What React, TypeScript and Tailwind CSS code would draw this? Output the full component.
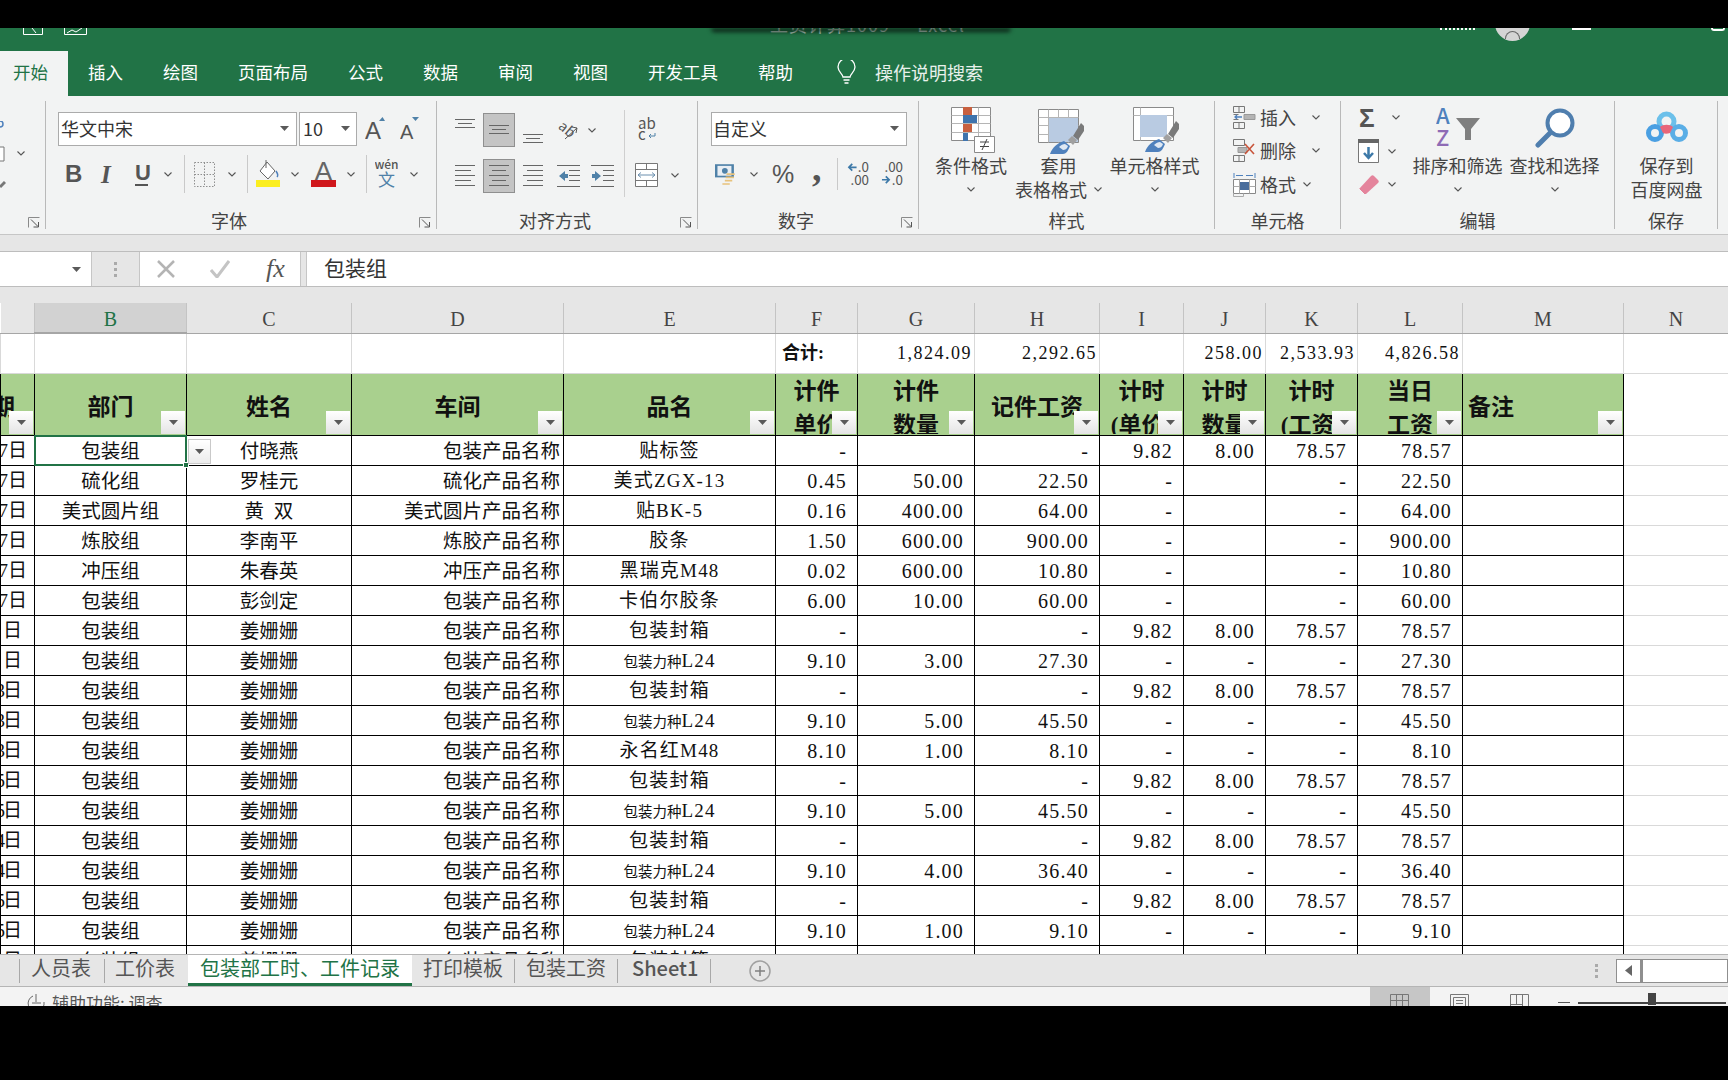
import React from 'react';

const Chev = ({ className = '' }: { className?: string }) => (
  <svg width="8" height="5" viewBox="0 0 8 5" className={`shrink-0 ${className}`}>
    <path d="M.5.5 4 4 7.5.5" fill="none" stroke="#555" strokeWidth="1.1" />
  </svg>
);

const Tri = ({ className = '' }: { className?: string }) => (
  <svg width="9" height="5" viewBox="0 0 9 5" className={`shrink-0 ${className}`}>
    <path d="M0 0h9L4.500 5z" fill="#5a5a5a" />
  </svg>
);

const Launcher = ({ className = '' }: { className?: string }) => (
  <svg width="12" height="11" viewBox="0 0 12 11" className={`absolute ${className}`}>
    <path d="M.5 10.500V.5H11.500" fill="none" stroke="#8a8a8a" />
    <path d="M3 2.500l7 7M10.500 5v5H5.500" fill="none" stroke="#555" />
  </svg>
);

// stack of horizontal strokes, used by the alignment buttons
const Lines = ({ rows, w = 20, h, color = '#666' }: { rows: number[][]; w?: number; h: number; color?: string }) => (
  <svg width={w} height={h} viewBox={`0 0 ${w} ${h}`} className="shrink-0">
    {rows.map(([x1, x2, y], i) => (
      <path key={i} d={`M${x1} ${y + 0.5}H${x2}`} stroke={color} />
    ))}
  </svg>
);

const GridBase = ({ children }: { children?: React.ReactNode }) => (
  <>
    <path d="M.5.5h40v33H.5z" fill="#fff" stroke="#8a8a8a" />
    <path d="M.5 8.500h40M.5 16.500h40M.5 25.500h40M10.500.5v33M20.500.5v33M30.500.5v33" stroke="#b5b5b5" />
    {children}
  </>
);

const Brush = () => (
  <>
    <path d="M35 27l8-13 3 3v5l-6 9z" fill="#7a7a7a" />
    <path d="M30 31l4-4 5 4-4 5z" fill="#a0a0a0" />
    <path d="M12 45c2-6 7-11 14-13l6 5c-2 5-4 8-7 8z" fill="#4f81bd" />
    <path d="M21 38c2-2 4-3 6-3l3 2c-1 3-3 4-5 4z" fill="#dfe8f3" />
  </>
);

const CondFormatIcon = () => (
  <svg width="46" height="46" viewBox="0 0 46 46">
    <path d="M.5.5h39v33H.5z" fill="#fff" stroke="#8a8a8a" />
    <path d="M.5 8.500h39M.5 16.500h39M.5 25.500h39M12.500.5v33M27.500.5v33" stroke="#b5b5b5" />
    <path d="M12 0h9v8h-9zM12 17h9v8h-9z" fill="#c8603f" />
    <path d="M12 8h14v8H12zM12 26h5v8h-5z" fill="#3f74ad" />
    <path d="M23.500 29.500h20v16h-20z" fill="#fff" stroke="#8a8a8a" />
    <path d="M29 35h9M29 39.500h9M31 43l5-11" stroke="#444" fill="none" />
  </svg>
);

const TableStyleIcon = () => (
  <svg width="46" height="46" viewBox="0 0 46 46">
    <GridBase>
      <path d="M11 9h29v24H11z" fill="#b9cbe2" />
    </GridBase>
    <Brush />
  </svg>
);

const CellStyleIcon = () => (
  <svg width="46" height="46" viewBox="0 0 46 46">
    <path d="M.5.5h40v33H.5z" fill="#fff" stroke="#8a8a8a" />
    <path d="M.5 8.500h40M7.500.5v33" stroke="#b5b5b5" />
    <path d="M7 8h27v22H7z" fill="#b9cbe2" />
    <Brush />
  </svg>
);

const InsertIcon = () => (
  <svg width="23" height="23" viewBox="0 0 23 23">
    <path d="M.5.5h11v6H.5zM.5 16.500h11v6H.5zM6 .5v6M6 16.500v6" fill="none" stroke="#777" />
    <path d="M11 8.500h11v5H11z" fill="#b4b4b4" stroke="#999" />
    <path d="M.5 8.500h5M.5 13.500h5" stroke="#777" />
    <path d="M9 11H2M4 9l-2 2 2 2" fill="none" stroke="#4f81bd" strokeWidth="1.300" />
  </svg>
);

const DeleteIcon = () => (
  <svg width="23" height="23" viewBox="0 0 23 23">
    <path d="M.5.5h11v6H.5zM.5 16.500h11v6H.5zM6 16.500v6" fill="none" stroke="#777" />
    <path d="M5 8.500h9v5H5z" fill="#b4b4b4" stroke="#999" />
    <path d="M12 5l9 10M21 5l-9 10" stroke="#c8543a" strokeWidth="1.600" />
  </svg>
);

const FormatIcon = () => (
  <svg width="23" height="25" viewBox="0 0 23 25">
    <path d="M1 1v5M22 1v5M3 3.500h7M13 3.500h7" stroke="#4f81bd" />
    <path d="M.5 7.500h22v14H.5z" fill="#fff" stroke="#888" />
    <path d="M.5 14.500h22M6.500 7.500v14M16.500 7.500v14" stroke="#aaa" />
    <path d="M7 10h9v8H7z" fill="#4a6d9c" />
    <path d="M.5 21.500v3h10v-3" fill="none" stroke="#aaa" />
  </svg>
);

const Baidu = () => (
  <svg width="42" height="32" viewBox="0 0 42 32">
    <circle cx="20.500" cy="10.500" r="7.500" fill="none" stroke="#6cc0ea" strokeWidth="5" />
    <circle cx="9" cy="22" r="6.500" fill="none" stroke="#4a9fe2" strokeWidth="5" />
    <circle cx="33" cy="22" r="6.500" fill="none" stroke="#5aaee6" strokeWidth="5" />
    <path d="M14 16c3-3 10-3 13 0l-3 6c-3 1-5 1-7 0z" fill="#e8667a" />
  </svg>
);

const ColorLetterA = ({ bar }: { bar: string }) => (
  <span className="flex h-[30px] w-[25px] flex-col items-center">
    <svg width="25" height="30" viewBox="0 0 25 30">
      <text x="12.500" y="21" textAnchor="middle" fontSize="26" fill="#666" fontFamily="Liberation Sans">A</text>
      <rect x="0" y="21" width="25" height="7" fill={bar} />
    </svg>
  </span>
);

const FillColor = () => (
  <svg width="24" height="30" viewBox="0 0 24 30">
    <path d="M11 3l8 9-7 8-8-8z" fill="#fff" stroke="#666" />
    <path d="M10 1v8" stroke="#666" />
    <path d="M20 12c2 3 2 5 1 6" fill="none" stroke="#4f81bd" strokeWidth="1.500" />
    <rect x="0" y="21" width="24" height="7" fill="#fbee1f" />
  </svg>
);

const MoneyIcon = () => (
  <svg width="28" height="27" viewBox="0 0 28 27">
    <rect x="0" y="1" width="23" height="16" fill="#4f81a8" />
    <path d="M3 3h17v12H3z" fill="#e9eef4" />
    <circle cx="12" cy="9" r="3.500" fill="#4f81a8" />
    <path d="M14 12h10v2H14zM13 16h10v2H13zM12 20h9v2h-9zM9 24h9v2H9z" fill="#e8c27c" />
  </svg>
);

const DecimalIcon = ({ more }: { more?: boolean }) => (
  <svg width="23" height="26" viewBox="0 0 23 26">
    {more ? (
      <>
        <text x="23" y="11" textAnchor="end" fontSize="14" fill="#555" fontFamily="Noto Sans CJK SC">.00</text>
        <text x="23" y="24" textAnchor="end" fontSize="14" fill="#555" fontFamily="Noto Sans CJK SC">.0</text>
        <path d="M1 19h7M5 15.500 8.500 19 5 22.500" fill="none" stroke="#3d79a8" strokeWidth="1.800" />
      </>
    ) : (
      <>
        <text x="23" y="11" textAnchor="end" fontSize="14" fill="#555" fontFamily="Noto Sans CJK SC">.0</text>
        <text x="23" y="24" textAnchor="end" fontSize="14" fill="#555" fontFamily="Noto Sans CJK SC">.00</text>
        <path d="M10 6H2M5.500 2.500 2 6l3.500 3.500" fill="none" stroke="#3d79a8" strokeWidth="1.800" />
      </>
    )}
  </svg>
);

const Group = ({ width, label, launcher, children }: { width: string; label: string; launcher?: boolean; children: React.ReactNode }) => (
  <div className={`relative my-[5px] flex shrink-0 flex-col border-r border-[#b9b9b9] ${width}`}>
    <div className="min-h-0 flex-1">{children}</div>
    <div className={`h-[17px] -translate-y-[2px] text-center text-[18px] leading-[20px] text-[#444] ${launcher ? 'pr-[24px]' : ''}`}>{label}</div>
    {launcher && <Launcher className="right-[5px] bottom-[1px]" />}
  </div>
);

const BigButton = ({ lines, chevInline, width, icon, iconH }: { lines: string[]; chevInline?: boolean; width: string; icon: React.ReactNode; iconH: string }) => (
  <div className={`flex shrink-0 flex-col items-center ${width}`}>
    <div className={`flex h-[52px] items-start justify-center ${iconH}`}>{icon}</div>
    <div className="whitespace-nowrap text-[18px] leading-[24px] text-[#444]">{lines[0]}</div>
    {lines[1] ? (
      <div className="flex items-center whitespace-nowrap text-[18px] leading-[24px] text-[#444]">
        {lines[1]}
        {chevInline && <Chev className="ml-[7px]" />}
      </div>
    ) : (
      <div className="flex h-[24px] items-center">
        <Chev />
      </div>
    )}
  </div>
);

const tabs = ['插入', '绘图', '页面布局', '公式', '数据', '审阅', '视图', '开发工具', '帮助'];

const Ribbon = () => (
  <div className="flex h-[139px] shrink-0 border-b border-[#c6c6c6] bg-[#f2f3f3] font-['Noto_Sans_CJK_SC',sans-serif]">
    <Group width="w-[46px]" label="" launcher>
      <div className="relative h-full overflow-hidden">
        <svg width="6" height="80" viewBox="0 0 6 80" className="absolute left-0 top-[20px]">
          <circle cx="0" cy="3" r="3" fill="none" stroke="#4f81bd" strokeWidth="1.500" />
          <path d="M-2 26h6v14h-6z" fill="#fff" stroke="#777" />
          <path d="M0 66l5-5" stroke="#777" strokeWidth="3" />
        </svg>
        <Chev className="absolute left-[17px] top-[50px]" />
      </div>
    </Group>

    <Group width="w-[391px]" label="字体" launcher>
      <div className="ml-[12px] mt-[11px] flex h-[34px] items-center">
        <div className="flex h-[34px] w-[239px] items-center justify-between border border-[#ababab] bg-white pb-[2px] pl-[2px] pr-[7px] text-[18px] text-[#333]">
          华文中宋
          <Tri />
        </div>
        <div className="ml-[2px] flex h-[34px] w-[58px] items-center justify-between border border-[#ababab] bg-white pb-[2px] pl-[3px] pr-[6px] text-[18px] text-[#333]">
          10
          <Tri />
        </div>
        <svg width="20" height="24" viewBox="0 0 20 24" className="ml-[8px]">
          <text x="0" y="22" fontSize="24" fill="#555" fontFamily="Liberation Sans">A</text>
          <path d="M14 4l3.500-4L20 4z" fill="#4f81a8" />
        </svg>
        <svg width="19" height="24" viewBox="0 0 19 24" className="ml-[15px]">
          <text x="0" y="22" fontSize="20" fill="#555" fontFamily="Liberation Sans">A</text>
          <path d="M12 0h7l-3.500 4z" fill="#4f81a8" />
        </svg>
      </div>
      <div className="mt-[15px] flex h-[26px] items-center text-[#555]">
        <span className="ml-[19px] w-[15px] font-['Liberation_Sans'] text-[24px] font-bold leading-none">B</span>
        <span className="ml-[21px] w-[11px] font-['Liberation_Serif'] text-[25px] font-bold italic leading-none">I</span>
        <span className="ml-[23px] w-[13px] border-b-2 border-[#555] font-['Liberation_Sans'] text-[22px] font-bold leading-[22px]">U</span>
        <Chev className="ml-[16px]" />
        <span className="ml-[12px] h-[38px] w-px shrink-0 bg-[#c9c9c9]" />
        <svg width="21" height="25" viewBox="0 0 21 25" className="ml-[9px] shrink-0">
          <path d="M.5.5h20v24H.5zM.5 12.500h20M10.500.5v24" fill="none" stroke="#8f8f8f" strokeDasharray="1.500 1.500" />
        </svg>
        <Chev className="ml-[13px]" />
        <span className="ml-[11px] h-[38px] w-px shrink-0 bg-[#c9c9c9]" />
        <span className="ml-[8px] flex w-[24px] shrink-0">
          <FillColor />
        </span>
        <Chev className="ml-[11px]" />
        <span className="ml-[12px] flex w-[25px] shrink-0">
          <ColorLetterA bar="#d0171c" />
        </span>
        <Chev className="ml-[11px]" />
        <span className="ml-[11px] h-[38px] w-px shrink-0 bg-[#c9c9c9]" />
        <svg width="23" height="30" viewBox="0 0 23 30" className="ml-[8px] shrink-0">
          <text x="11.500" y="10" textAnchor="middle" fontSize="12" fontWeight="500" fill="#555" fontFamily="Noto Sans CJK SC">wén</text>
          <text x="11.500" y="27" textAnchor="middle" fontSize="17" fill="#4f81a8" fontFamily="Noto Sans CJK SC">文</text>
        </svg>
        <Chev className="ml-[12px]" />
      </div>
    </Group>

    <Group width="w-[261px]" label="对齐方式" launcher>
      <div className="flex">
        <div className="w-[187px]">
          <div className="mt-[12px] flex h-[34px] items-center">
            <span className="ml-[18px] -mt-[12px] flex">
              <Lines h={10} rows={[[0, 20, 0], [3, 17, 4], [0, 20, 8]]} />
            </span>
            <span className="ml-[8px] flex h-[34px] w-[32px] items-center justify-center border border-[#8f8f8f] bg-[#c4c4c4]">
              <Lines h={10} rows={[[0, 20, 0], [3, 17, 4], [0, 20, 8]]} />
            </span>
            <span className="ml-[8px] mt-[18px] flex">
              <Lines h={10} rows={[[0, 20, 0], [3, 17, 4], [0, 20, 8]]} />
            </span>
            <svg width="21" height="20" viewBox="0 0 21 20" className="ml-[15px] shrink-0">
              <text x="1" y="12" fontSize="14" fill="#555" transform="rotate(40 6 8)" fontFamily="Noto Sans CJK SC">ab</text>
              <path d="M7 19 19 8M14 7l5 1-1 5" fill="none" stroke="#555" />
            </svg>
            <Chev className="ml-[9px]" />
          </div>
          <div className="mt-[12px] flex h-[34px] items-center">
            <span className="ml-[18px] flex">
              <Lines h={22} rows={[[0, 20, 0], [0, 16, 5], [0, 20, 10], [0, 16, 15], [0, 20, 20]]} />
            </span>
            <span className="ml-[8px] flex h-[34px] w-[32px] items-center justify-center border border-[#8f8f8f] bg-[#c4c4c4]">
              <Lines h={22} rows={[[0, 20, 0], [3, 17, 5], [0, 20, 10], [3, 17, 15], [0, 20, 20]]} />
            </span>
            <span className="ml-[8px] flex">
              <Lines h={22} rows={[[0, 20, 0], [4, 20, 5], [0, 20, 10], [4, 20, 15], [0, 20, 20]]} />
            </span>
            <svg width="23" height="22" viewBox="0 0 23 22" className="ml-[14px] shrink-0">
              <path d="M0 .5h23M0 21.500h23M12 5.500h11M12 10.500h11M12 15.500h11" stroke="#666" />
              <path d="M2 11l6-5v3h3v4H8v3z" fill="#4f81a8" />
            </svg>
            <svg width="23" height="22" viewBox="0 0 23 22" className="ml-[11px] shrink-0">
              <path d="M0 .5h23M0 21.500h23M12 5.500h11M12 10.500h11M12 15.500h11" stroke="#666" />
              <path d="M10 11 4 6v3H1v4h3v3z" fill="#4f81a8" />
            </svg>
          </div>
        </div>
        <span className="mt-[9px] h-[87px] w-px bg-[#cfcfcf]" />
        <div className="ml-[10px] flex flex-col">
          <svg width="20" height="24" viewBox="0 0 20 24" className="mt-[16px] ml-[3px]">
            <text x="0" y="12" fontSize="15" fill="#555" fontFamily="Noto Sans CJK SC">ab</text>
            <text x="0" y="23" fontSize="15" fill="#555" fontFamily="Noto Sans CJK SC">c</text>
            <path d="M17 16v3h-6M13 17l-2 2 2 2" fill="none" stroke="#4f81a8" />
          </svg>
          <div className="mt-[22px] flex items-center">
            <svg width="23" height="24" viewBox="0 0 23 24">
              <path d="M.5.5h22v23H.5z" fill="#fff" stroke="#777" />
              <path d="M.5 6.500h22M.5 17.500h22M11.500.5v6M11.500 17.500v6" stroke="#777" />
              <path d="M3 12h17M6 9.500 3 12l3 2.500M17 9.500l3 2.500-3 2.500" fill="none" stroke="#6b8fae" />
            </svg>
            <Chev className="ml-[13px]" />
          </div>
        </div>
      </div>
    </Group>

    <Group width="w-[221px]" label="数字" launcher>
      <div className="ml-[13px] mt-[11px] flex h-[34px] w-[196px] items-center justify-between border border-[#ababab] bg-white pb-[2px] pl-px pr-[7px] text-[18px] text-[#333]">
        自定义
        <Tri />
      </div>
      <div className="mt-[15px] flex h-[26px] items-center text-[#555]">
        <span className="ml-[17px] flex w-[23px] shrink-0">
          <MoneyIcon />
        </span>
        <Chev className="ml-[12px]" />
        <span className="ml-[14px] w-[21px] shrink-0 text-center font-['Liberation_Sans'] text-[25px] leading-none">%</span>
        <span className="ml-[19px] -mt-[12px] w-[9px] shrink-0 font-['Liberation_Serif'] text-[38px] font-bold leading-[18px]">,</span>
        <span className="ml-[16px] h-[32px] w-px shrink-0 bg-[#c9c9c9]" />
        <span className="ml-[9px] flex w-[22px] shrink-0">
          <DecimalIcon />
        </span>
        <span className="ml-[12px] flex w-[22px] shrink-0">
          <DecimalIcon more />
        </span>
      </div>
    </Group>

    <Group width="w-[296px]" label="样式">
      <div className="flex">
        <div className="w-[11px] shrink-0" />
        <BigButton width="w-[82px]" iconH="pl-[5px] pt-[6px]" lines={['条件格式']} icon={<CondFormatIcon />} />
        <BigButton width="w-[93px]" iconH="pl-[4px] pt-[8px]" lines={['套用', '表格格式']} chevInline icon={<TableStyleIcon />} />
        <BigButton width="w-[99px]" iconH="pl-[2px] pt-[6px]" lines={['单元格样式']} icon={<CellStyleIcon />} />
      </div>
    </Group>

    <Group width="w-[126px]" label="单元格">
      <div className="flex h-[32px] items-center text-[18px] text-[#444]">
        <span className="ml-[18px] flex w-[23px] shrink-0"><InsertIcon /></span>
        <span className="ml-[4px] w-[36px]">插入</span>
        <Chev className="ml-[16px]" />
      </div>
      <div className="flex h-[34px] items-center text-[18px] text-[#444]">
        <span className="ml-[18px] flex w-[23px] shrink-0"><DeleteIcon /></span>
        <span className="ml-[4px] w-[36px]">删除</span>
        <Chev className="ml-[16px]" />
      </div>
      <div className="flex h-[34px] items-center text-[18px] text-[#444]">
        <span className="ml-[18px] flex w-[23px] shrink-0"><FormatIcon /></span>
        <span className="ml-[4px] w-[36px]">格式</span>
        <Chev className="ml-[7px]" />
      </div>
    </Group>

    <Group width="w-[274px]" label="编辑">
      <div className="flex">
        <div className="w-[68px] shrink-0">
          <div className="flex h-[33px] items-center">
            <span className="ml-[18px] w-[20px] font-['Liberation_Sans'] text-[26px] font-bold leading-none text-[#555]">Σ</span>
            <Chev className="ml-[13px]" />
          </div>
          <div className="flex h-[34px] items-center">
            <svg width="21" height="24" viewBox="0 0 21 24" className="ml-[17px]">
              <path d="M.5.5h20v23H.5z" fill="#fff" stroke="#777" />
              <path d="M0 0h21v4H0z" fill="#666" />
              <path d="M10.500 8v11M6 14l4.500 5 4.500-5" fill="none" stroke="#3d79a8" strokeWidth="2.500" />
            </svg>
            <Chev className="ml-[9px]" />
          </div>
          <div className="flex h-[33px] items-center">
            <svg width="21" height="21" viewBox="0 0 21 21" className="ml-[17px]">
              <path d="M1 15 13 2c1-1 2-1 3 0l4 4c1 1 1 2 0 3L8 20H6z" fill="#e4849c" />
              <path d="M1 15l5 5" stroke="#f4f4f4" />
            </svg>
            <Chev className="ml-[9px]" />
          </div>
        </div>
        <BigButton
          width="w-[97px]"
          iconH="pt-[6px]"
          lines={['排序和筛选']}
          icon={
            <svg width="44" height="40" viewBox="0 0 44 40">
              <text x="0" y="17" fontSize="22" fontWeight="500" fill="#4f81bd" fontFamily="Noto Sans CJK SC">A</text>
              <text x="0" y="39" fontSize="22" fontWeight="500" fill="#8e6bb5" fontFamily="Noto Sans CJK SC">Z</text>
              <path d="M20 11h24l-9 11v11h-6V22z" fill="#7f7f7f" />
            </svg>
          }
        />
        <BigButton
          width="w-[97px]"
          iconH="pt-[7px]"
          lines={['查找和选择']}
          icon={
            <svg width="40" height="40" viewBox="0 0 40 40">
              <circle cx="25" cy="15" r="12.500" fill="#fff" stroke="#4f7eae" strokeWidth="4" />
              <path d="M15 25 3 37" stroke="#4f7eae" strokeWidth="5" strokeLinecap="round" />
            </svg>
          }
        />
      </div>
    </Group>

    <Group width="w-[103px]" label="保存">
      <BigButton width="w-[103px]" iconH="pt-[10px]" lines={['保存到', '百度网盘']} icon={<Baidu />} />
    </Group>
  </div>
);

const FilterBtn = () => (
  <span className="absolute bottom-[1px] right-[1px] flex h-[23px] w-[24px] items-center justify-center bg-gradient-to-b from-white to-[#e4e4e4]">
    <Tri />
  </span>
);

const LINE = 'h-[30px] overflow-hidden border border-black p-0 whitespace-nowrap leading-[20px]';
const NUM = `${LINE} pr-[10px] text-right`;

type Row = [string, string, string, string, string, string, string, string, string, string, string, string];

const piece = (date: string, product: string, price: string, qty: string, wage: string): Row => [
  date, '包装组', '姜姗姗', '包装产品名称', product, price, qty, wage, '-', '-', '-', wage,
];

const sealed = (date: string): Row => [date, '包装组', '姜姗姗', '包装产品名称', '包装封箱', '-', '', '-', '9.82', '8.00', '78.57', '78.57'];

const rows: Row[] = [
  ['7日', '包装组', '付晓燕', '包装产品名称', '贴标签', '-', '', '-', '9.82', '8.00', '78.57', '78.57'],
  ['7日', '硫化组', '罗桂元', '硫化产品名称', '美式ZGX-13', '0.45', '50.00', '22.50', '-', '', '-', '22.50'],
  ['7日', '美式圆片组', '黄  双', '美式圆片产品名称', '贴BK-5', '0.16', '400.00', '64.00', '-', '', '-', '64.00'],
  ['7日', '炼胶组', '李南平', '炼胶产品名称', '胶条', '1.50', '600.00', '900.00', '-', '', '-', '900.00'],
  ['7日', '冲压组', '朱春英', '冲压产品名称', '黑瑞克M48', '0.02', '600.00', '10.80', '-', '', '-', '10.80'],
  ['7日', '包装组', '彭剑定', '包装产品名称', '卡伯尔胶条', '6.00', '10.00', '60.00', '-', '', '-', '60.00'],
  sealed('日'),
  piece('日', 'L24', '9.10', '3.00', '27.30'),
  sealed('3日'),
  piece('3日', 'L24', '9.10', '5.00', '45.50'),
  piece('3日', '永名红M48', '8.10', '1.00', '8.10'),
  sealed('5日'),
  piece('5日', 'L24', '9.10', '5.00', '45.50'),
  sealed('4日'),
  piece('4日', 'L24', '9.10', '4.00', '36.40'),
  sealed('5日'),
  piece('5日', 'L24', '9.10', '1.00', '9.10'),
  sealed('5日'),
];

const colClasses = ['w-[34px]', 'w-[152px]', 'w-[165px]', 'w-[212px]', 'w-[212px]', 'w-[82px]', 'w-[117px]', 'w-[125px]', 'w-[84px]', 'w-[82px]', 'w-[92px]', 'w-[105px]', 'w-[161px]', 'w-[105px]'];

const letters = ['', 'B', 'C', 'D', 'E', 'F', 'G', 'H', 'I', 'J', 'K', 'L', 'M', 'N'];

const headers: { top: string; bottom?: string }[] = [
  { top: '部门' },
  { top: '姓名' },
  { top: '车间' },
  { top: '品名' },
  { top: '计件', bottom: '单价' },
  { top: '计件', bottom: '数量' },
  { top: '记件工资' },
  { top: '计时', bottom: '(单价)' },
  { top: '计时', bottom: '数量' },
  { top: '计时', bottom: '(工资)' },
  { top: '当日', bottom: '工资' },
];

const Sheet = () => (
  <div className="h-[651px] shrink-0 overflow-hidden bg-white">
    <table className="w-[1728px] table-fixed font-['Liberation_Serif','Noto_Sans_CJK_SC',serif] text-[#111]">
      <colgroup>
        {colClasses.map((c, i) => (
          <col key={i} className={c} />
        ))}
      </colgroup>
      <tbody>
        <tr className="h-[30px] bg-[#e6e6e6]">
          {letters.map((l, i) => (
            <th
              key={i}
              className={`h-[30px] border-b border-r border-b-[#a6a6a6] border-r-[#c4c4c4] pt-[3px] text-center text-[20px] font-normal leading-none ${
                i === 1 ? 'border-b-2 border-b-[#217346] bg-[#d2d2d2] text-[#217346]' : 'text-[#444]'
              }`}
            >
              {l}
            </th>
          ))}
        </tr>
        <tr className="h-[40px] text-[18px] tracking-[1.500px]">
          {letters.map((_, i) => {
            const val: Record<number, string> = { 6: '1,824.09', 7: '2,292.65', 9: '258.00', 10: '2,533.93', 11: '4,826.58' };
            if (i === 5)
              return (
                <td key={i} className="border border-[#d9d9d9] pl-[6px] text-[18px] font-bold tracking-normal">
                  合计:
                </td>
              );
            return (
              <td key={i} className="overflow-hidden whitespace-nowrap border border-[#d9d9d9] pr-[2px] text-right">
                {val[i]}
              </td>
            );
          })}
        </tr>
        <tr className="h-[62px] bg-[#a9d08e] text-[23px] font-bold">
          <th className="relative h-[62px] overflow-hidden whitespace-nowrap border border-black p-0 align-top font-bold">
            <div className="flex h-[60px] justify-end overflow-hidden pr-[19px] pt-[17px] leading-[33px]">日期</div>
            <FilterBtn />
          </th>
          {headers.map((h, i) => (
            <th key={i} className="relative h-[62px] overflow-hidden whitespace-nowrap border border-black p-0 align-top font-bold">
              <div className={`h-[60px] overflow-hidden text-center ${h.bottom ? 'pt-px leading-[34px]' : 'pt-[17px] leading-[33px]'}`}>
                <div>{h.top}</div>
                {h.bottom && <div>{h.bottom}</div>}
              </div>
              <FilterBtn />
            </th>
          ))}
          <th className="relative h-[62px] border border-black p-0 align-top font-bold">
            <div className="h-[60px] pl-[5px] pt-[17px] text-left leading-[33px]">备注</div>
            <FilterBtn />
          </th>
          <td className="border border-[#d9d9d9] bg-white" />
        </tr>
        {rows.map((r, ri) => (
          <tr key={ri} className="h-[30px]">
            <td className={`${LINE} pt-[2px] text-[19px]`}>
              <div className={`flex justify-end ${ri < 6 ? 'pr-[7px]' : 'pr-[14px] tracking-[-2px]'}`}>{r[0]}</div>
            </td>
            <td className="relative h-[30px] whitespace-nowrap border border-black p-0 pt-[3px] text-center text-[19.500px] leading-[20px]">
              {r[1]}
              {ri === 0 && (
                <>
                  <span className="absolute -inset-px border-2 border-[#217346]" />
                  <span className="absolute -bottom-[3px] -right-[3px] h-[6px] w-[6px] border border-white bg-[#217346]" />
                  <span className="absolute top-[3px] left-[calc(100%+2px)] z-10 flex h-[25px] w-[23px] items-center justify-center border border-[#c9c9c9] bg-gradient-to-b from-white to-[#ececec]">
                    <Tri />
                  </span>
                </>
              )}
            </td>
            <td className={`${LINE} whitespace-pre pt-[3px] text-center text-[19.500px]`}>{r[2]}</td>
            <td className={`${LINE} pr-[3px] pt-[3px] text-right text-[19.500px]`}>{r[3]}</td>
            <td className={`${LINE} pt-[2px] text-center text-[19px] tracking-[1.200px]`}>
              {r[4] === 'L24' ? (
                <>
                  <span className="text-[14.500px] tracking-normal">包装力种</span>L24
                </>
              ) : (
                r[4]
              )}
            </td>
            {r.slice(5, 12).map((v, i) => (
              <td key={i} className={`${NUM} pt-px text-[20px] tracking-[1.200px]`}>
                {v}
              </td>
            ))}
            <td className={LINE} />
            <td className="h-[30px] border border-[#d9d9d9] p-0" />
          </tr>
        ))}
      </tbody>
    </table>
  </div>
);

const TabSep = ({ className = '' }: { className?: string }) => <span className={`h-[24px] w-px shrink-0 bg-[#a8a8a8] ${className}`} />;

const SheetTabs = () => (
  <div className="flex h-[33px] shrink-0 items-center border-y border-[#b5b5b5] bg-[#e6e6e6] font-['Noto_Sans_CJK_SC',sans-serif] text-[20px] text-[#555]">
    <TabSep className="ml-[19px]" />
    <span className="ml-[11px] w-[60px] pb-[6px]">人员表</span>
    <TabSep className="ml-[13px]" />
    <span className="ml-[10px] w-[60px] pb-[6px]">工价表</span>
    <span className="ml-[13px] flex h-[31px] w-[224px] shrink-0 items-center justify-center self-start border-b-[3px] border-[#217346] bg-white pb-[3px] text-[#217346]">
      包装部工时、工件记录
    </span>
    <span className="ml-[11px] w-[80px] pb-[6px]">打印模板</span>
    <TabSep className="ml-[11px]" />
    <span className="ml-[11px] w-[80px] pb-[6px]">包装工资</span>
    <TabSep className="ml-[11px]" />
    <span className="ml-[14px] w-[62px] pb-[6px] font-medium leading-none">Sheet1</span>
    <TabSep className="ml-[16px]" />
    <svg width="22" height="22" viewBox="0 0 22 22" className="ml-[38px]">
      <circle cx="11" cy="11" r="10" fill="none" stroke="#a0a0a0" strokeWidth="1.500" />
      <path d="M11 6v10M6 11h10" stroke="#808080" strokeWidth="1.500" />
    </svg>
    <span className="ml-[824px] flex h-[14px] w-[3px] shrink-0 flex-col justify-between">
      <i className="h-[3px] bg-[#aaa]" />
      <i className="h-[3px] bg-[#aaa]" />
      <i className="h-[3px] bg-[#aaa]" />
    </span>
    <span className="ml-[18px] flex h-[24px] w-[25px] shrink-0 items-center justify-center border border-[#8f8f8f] bg-white">
      <svg width="7" height="11" viewBox="0 0 7 11">
        <path d="M7 0v11L0 5.500z" fill="#666" />
      </svg>
    </span>
    <span className="h-[24px] flex-1 border border-l-2 border-[#8f8f8f] bg-white" />
  </div>
);

const StatusBar = () => (
  <div className="flex h-[19px] shrink-0 items-start overflow-hidden bg-[#f3f3f3] font-['Noto_Sans_CJK_SC',sans-serif] text-[#555]">
    <svg width="19" height="19" viewBox="0 0 19 19" className="ml-[27px] mt-[7px] shrink-0">
      <path d="M6 2A8 8 0 1 0 17 8" fill="none" stroke="#666" />
      <path d="M9 0v8M5 9h9" stroke="#666" />
    </svg>
    <span className="ml-[6px] mt-[7px] whitespace-nowrap text-[17px] leading-none">辅助功能: 调查</span>
    <span className="ml-[1207px] flex h-[19px] w-[60px] shrink-0 justify-center bg-[#c6c6c6] pt-[7px]">
      <svg width="19" height="14" viewBox="0 0 19 14">
        <path d="M.5.5h18v13H.5zM.5 6.500h18M6.500.5v13M12.500.5v13" fill="none" stroke="#777" />
      </svg>
    </span>
    <svg width="19" height="14" viewBox="0 0 19 14" className="ml-[20px] mt-[7px] shrink-0">
      <path d="M.5.5h18v13H.5zM3.500 3.500h12v10h-12zM6 6.500h7M6 9.500h7" fill="none" stroke="#777" />
    </svg>
    <svg width="19" height="14" viewBox="0 0 19 14" className="ml-[41px] mt-[7px] shrink-0">
      <path d="M.5.5h18v13H.5zM6.500.5v10M12.500.5v13M.5 10.500h12" fill="none" stroke="#777" />
    </svg>
    <span className="ml-[29px] mt-[15px] h-px w-[12px] shrink-0 bg-[#555]" />
    <span className="relative ml-[8px] mt-[15px] h-[2px] w-[148px] shrink-0 bg-[#444]">
      <span className="absolute -top-[9px] left-[70px] h-[12px] w-[8px] bg-[#444]" />
    </span>
  </div>
);

export default function App() {
  return (
    <div className="flex h-[1080px] w-[1728px] flex-col overflow-hidden bg-black">
      <div className="h-[28px] shrink-0 bg-black" />

      {/* title bar, only its lower edge is on screen */}
      <div className="relative flex h-[23px] shrink-0 items-start overflow-hidden bg-[#217346] font-['Noto_Sans_CJK_SC',sans-serif]">
        <svg width="20" height="8" viewBox="0 0 20 8" className="ml-[23px] shrink-0">
          <path d="M.5 0v6.500h19V0M9 0l4 5" fill="none" stroke="#fff" />
        </svg>
        <svg width="23" height="8" viewBox="0 0 23 8" className="ml-[21px] shrink-0">
          <path d="M.5 0v6.500h22V0M3 5l5-3 4 2 6-4" fill="none" stroke="#fff" />
        </svg>
        <span className="ml-[683px] -mt-[13px] w-[188px] shrink-0 whitespace-pre text-[18px] leading-[18px] tracking-[1px] text-white/80">工资计算1009  -  Excel</span>
        <span className="absolute left-[711px] top-0 h-[4px] w-[300px] rounded-b bg-[#0a1f14] blur-[2px]" />
        <span className="ml-[482px] h-[2px] w-[35px] shrink-0 border-b-2 border-dotted border-white" />
        <span className="relative ml-[20px] -mt-[22px] h-[35px] w-[35px] shrink-0 rounded-full bg-[#d4d4d4]">
          <i className="absolute bottom-[2px] left-[10px] h-[8px] w-[15px] rounded-t-full border-x border-t border-[#666]" />
        </span>
        <span className="ml-[42px] h-[2px] w-[19px] shrink-0 border-x-2 border-b-2 border-white" />
        <span className="ml-[120px] h-[3px] w-[14px] shrink-0 rounded-b border-x-2 border-b-2 border-white" />
      </div>

      <div className="flex h-[45px] shrink-0 items-stretch bg-[#217346] pb-[3px] font-['Noto_Sans_CJK_SC',sans-serif] text-[17.500px] text-white">
        <div className="-mb-[3px] flex w-[68px] items-center justify-start bg-[#f2f3f3] pb-[3px] pl-[13px] text-[#217346]">开始</div>
        {tabs.map((t) => (
          <div key={t} className="flex items-center px-5">
            {t}
          </div>
        ))}
        <svg width="19" height="24" viewBox="0 0 19 24" className="ml-[24px] self-center">
          <path d="M6 17c0-3-5-5-5-10a8.500 8.500 0 0 1 17 0c0 5-5 7-5 10zM6.500 20h6M7.500 23h4" fill="none" stroke="#fff" strokeWidth="1.300" />
        </svg>
        <div className="ml-[19px] flex items-center text-[18px] text-white/90">操作说明搜索</div>
      </div>

      <Ribbon />

      <div className="h-[16px] shrink-0 bg-[#e6e6e6]" />

      <div className="flex h-[36px] shrink-0 items-stretch border-y border-[#bdbdbd] bg-[#e6e6e6] font-['Noto_Sans_CJK_SC',sans-serif]">
        <div className="flex w-[92px] items-center justify-end border-r border-[#c6c6c6] bg-white pr-[10px]">
          <Tri />
        </div>
        <div className="flex w-[47px] flex-col items-center justify-center gap-[3px]">
          <i className="h-[3px] w-[3px] bg-[#aaa]" />
          <i className="h-[3px] w-[3px] bg-[#aaa]" />
          <i className="h-[3px] w-[3px] bg-[#aaa]" />
        </div>
        <div className="flex w-[162px] items-center border-x border-[#c6c6c6] bg-white">
          <svg width="18" height="18" viewBox="0 0 18 18" className="ml-[17px]">
            <path d="M1 1l16 16M17 1 1 17" stroke="#b4b4b4" strokeWidth="2.500" />
          </svg>
          <svg width="20" height="18" viewBox="0 0 20 18" className="ml-[35px]">
            <path d="M1 10l6 7L19 1" fill="none" stroke="#c4c4c4" strokeWidth="3" />
          </svg>
          <span className="ml-[36px] font-['Liberation_Serif'] text-[26px] italic leading-none text-[#555]">fx</span>
        </div>
        <div className="ml-[5px] flex flex-1 items-center border-l border-[#c6c6c6] bg-white pb-[2px] pl-[17px] text-[21px] text-[#333]">包装组</div>
      </div>

      <div className="h-[16px] shrink-0 bg-[#e6e6e6]" />

      <Sheet />
      <SheetTabs />
      <StatusBar />

      <div className="flex-1 bg-black" />
    </div>
  );
}
